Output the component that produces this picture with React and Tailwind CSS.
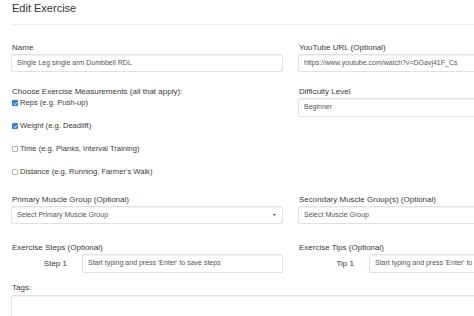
import React from "react";

const font = { fontFamily: '"Liberation Sans", Arial, sans-serif' };

function Label({ children, className = "" }) {
  return (
    <div className={`text-[8px] leading-[10px] text-[#3a3a3a] mb-[1px] pl-[1px] whitespace-nowrap ${className}`}>
      {children}
    </div>
  );
}

function Field({ value, h = "h-[18px]", children }) {
  return (
    <div
      className={`${h} w-full flex items-center justify-between bg-white border border-[#e0e0e0] rounded-[2px] shadow-[inset_0_1px_1px_rgba(0,0,0,0.06)] pl-[5px] pr-[4px] text-[7px] text-[#555] whitespace-nowrap overflow-hidden`}
    >
      <span>{value}</span>
      {children}
    </div>
  );
}

function Check({ checked, label }) {
  return (
    <div className="h-[10px] flex items-center gap-[2px] text-[7.6px] text-[#3a3a3a] whitespace-nowrap">
      {checked ? (
        <span className="w-[6px] h-[6px] ml-[1px] rounded-[1px] bg-[#2f7fe0] flex items-center justify-center">
          <svg width="5" height="5" viewBox="0 0 10 10">
            <path d="M2 5.2 L4.2 7.4 L8 2.8" fill="none" stroke="white" strokeWidth="1.8" />
          </svg>
        </span>
      ) : (
        <span className="w-[6px] h-[6px] ml-[1px] rounded-[1px] bg-white border border-[#b5b5b5]" />
      )}
      <span>{label}</span>
    </div>
  );
}

function StepRow({ name, text }) {
  return (
    <div className="flex items-center">
      <div className="w-[71px] shrink-0 pr-[15px] text-right text-[8px] text-[#3a3a3a]">{name}</div>
      <Field value={text} h="h-[19px]" />
    </div>
  );
}

export default function App() {
  return (
    <div style={font} className="w-[474px] h-[316px] overflow-hidden bg-white">
      <div className="w-[590px] pl-[11px]">
        {/* Header */}
        <h1 className="pt-[1px] pl-[1px] text-[11px] leading-[14px] text-[#333]">Edit Exercise</h1>
        <div className="mt-[9px] ml-[1px] h-px bg-[#eee]" />

        <div className="grid grid-cols-[272px_272px] gap-x-[15px]">
          {/* Row 1 */}
          <div className="mt-[18px]">
            <Label>Name</Label>
            <Field value="Single Leg single arm Dumbbell RDL" />
          </div>
          <div className="mt-[18px]">
            <Label>YouTube URL (Optional)</Label>
            <Field value="https://www.youtube.com/watch?v=DGavj41F_Cs" />
          </div>

          {/* Row 2 */}
          <div className="mt-[15px]">
            <Label>Choose Exercise Measurements (all that apply):</Label>
            <div className="flex flex-col gap-[13px] mt-[1px]">
              <Check checked label="Reps (e.g. Push-up)" />
              <Check checked label="Weight (e.g. Deadlift)" />
              <Check label="Time (e.g. Planks, Interval Training)" />
              <Check label="Distance (e.g. Running, Farmer's Walk)" />
            </div>
          </div>
          <div className="mt-[15px]">
            <Label>Difficulty Level</Label>
            <Field value="Beginner" h="h-[19px]" />
          </div>

          {/* Row 3 */}
          <div className="mt-[18px]">
            <Label>Primary Muscle Group (Optional)</Label>
            <Field value="Select Primary Muscle Group">
              <svg width="3" height="2" viewBox="0 0 4 3" className="mr-[2px]">
                <path d="M0 0 H4 L2 3 Z" fill="#444" />
              </svg>
            </Field>
          </div>
          <div className="mt-[18px]">
            <Label>Secondary Muscle Group(s) (Optional)</Label>
            <Field value="Select Muscle Group" />
          </div>

          {/* Row 4 */}
          <div className="mt-[19px]">
            <Label>Exercise Steps (Optional)</Label>
            <StepRow name="Step 1" text="Start typing and press 'Enter' to save steps" />
          </div>
          <div className="mt-[19px]">
            <Label>Exercise Tips (Optional)</Label>
            <StepRow name="Tip 1" text="Start typing and press 'Enter' to save tips" />
          </div>
        </div>

        {/* Tags */}
        <div className="mt-[10px]">
          <Label className="mb-[2px]">Tags:</Label>
          <div className="h-[40px] w-full border border-[#e0e0e0] rounded-[2px] shadow-[inset_0_1px_1px_rgba(0,0,0,0.06)]" />
        </div>
      </div>
    </div>
  );
}
